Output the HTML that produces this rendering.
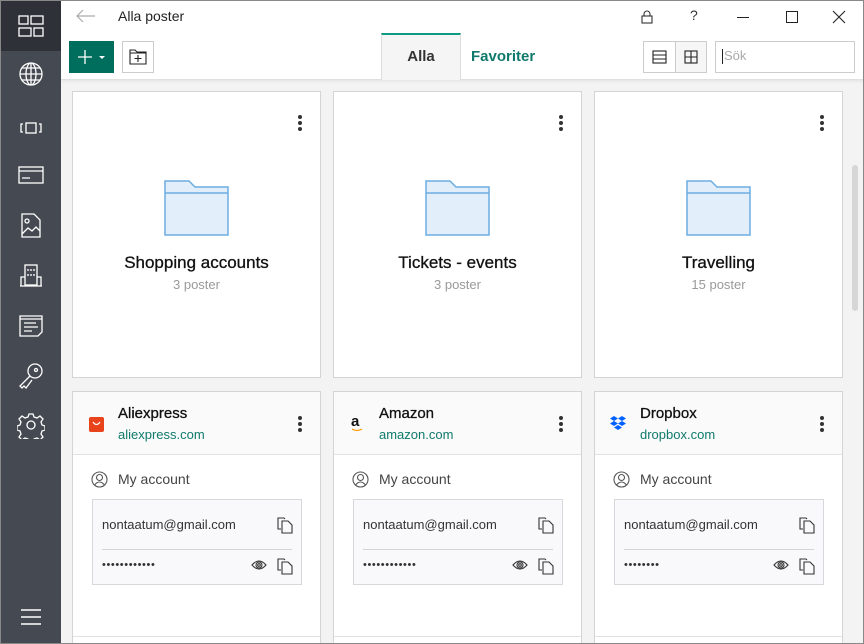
<!DOCTYPE html>
<html style="width:864px;height:644px;overflow:hidden"><head><meta charset="utf-8"><style>
*{box-sizing:border-box;margin:0;padding:0}
body{width:864px;height:644px;overflow:hidden;font-family:"Segoe UI","Liberation Sans",sans-serif;background:#f3f3f3;position:relative;color:#222}
.side{position:absolute;left:0;top:0;width:61px;height:644px;background:#454a52}
.side .top{position:absolute;left:0;top:0;width:61px;height:51px;background:#2e3238}
.ic{position:absolute;left:17px;width:28px;height:28px}
.hdr{position:absolute;left:61px;top:0;right:0;height:80px;background:#fff;border-bottom:1px solid #e0e0e0;box-shadow:0 1px 3px rgba(0,0,0,.08)}
.abs{position:absolute}
.card{position:absolute;background:#fff;border:1px solid #d4d4d4}
.dots{position:absolute;width:4px}
.dots i{display:block;width:4px;height:4px;border-radius:2px;background:#333;margin-bottom:2px}
.ftitle{position:absolute;left:0;right:0;text-align:center;font-size:17px;color:#111;-webkit-text-stroke:0.3px #111}
.fsub{position:absolute;left:0;right:0;text-align:center;font-size:13px;color:#999}
.ch{position:absolute;left:0;right:0;top:0;height:63px;background:#fafafa;border-bottom:1px solid #e2e2e2}
.nm{position:absolute;left:45px;top:13px;font-size:15px;color:#111;-webkit-text-stroke:0.3px #111}
.url{position:absolute;left:45px;top:35px;font-size:13px;color:#0f7a6b}
.acc{position:absolute;left:45px;top:79px;font-size:14px;color:#444}
.box{position:absolute;left:19px;top:107px;width:210px;height:86px;background:#f9f9fb;border:1px solid #d8d8dc}
.em{position:absolute;left:9px;top:17px;font-size:13px;color:#333}
.pw{position:absolute;left:9px;top:59px;font-size:11px;color:#333;letter-spacing:0.6px}
.sep{position:absolute;left:9px;right:9px;top:49px;border-top:1px solid #d4d4d4}
</style></head><body>
<div class="side"><div class="top"></div>
<svg class="ic" style="top:12px" viewBox="0 0 28 28" fill="none" stroke="#fff" stroke-width="1.3"><rect x="2" y="4" width="9" height="8"/><rect x="14" y="4" width="12" height="8"/><rect x="2" y="16" width="12" height="8"/><rect x="17" y="16" width="9" height="8"/></svg>
<svg class="ic" style="top:60px" viewBox="0 0 28 28" fill="none" stroke="#fff" stroke-width="1.3"><circle cx="14" cy="14" r="11"/><ellipse cx="14" cy="14" rx="5" ry="11"/><path d="M3 14h22M5 8h18M5 20h18M14 3v22"/></svg>
<svg class="ic" style="top:114px" viewBox="0 0 28 28" fill="none" stroke="#fff" stroke-width="1.3"><rect x="9" y="9" width="10" height="10"/><path d="M6 10h-2v8h2M22 10h2v8h-2"/></svg>
<svg class="ic" style="top:161px" viewBox="0 0 28 28" fill="none" stroke="#fff" stroke-width="1.3"><rect x="2" y="6" width="24" height="16"/><path d="M2 10h24M5 17h8"/></svg>
<svg class="ic" style="top:211px" viewBox="0 0 28 28" fill="none" stroke="#fff" stroke-width="1.3"><path d="M5 3h12l6 6v17H5z"/><circle cx="10" cy="10" r="2"/><path d="M5 23l6-6 4 3 4-4 4 4"/></svg>
<svg class="ic" style="top:261px" viewBox="0 0 28 28" fill="none" stroke="#fff" stroke-width="1.3"><rect x="8" y="4" width="12" height="20"/><path d="M3 25h22M4 25v-9h4M24 25v-9h-4M11 8v2M14 8v2M17 8v2M11 13v2M14 13v2M17 13v2"/></svg>
<svg class="ic" style="top:311px" viewBox="0 0 28 28" fill="none" stroke="#fff" stroke-width="1.3"><path d="M3 5h22v16l-4 4H3z M3 8h22M7 12h12M7 16h14M7 20h8"/></svg>
<svg class="ic" style="top:361px" viewBox="0 0 28 28" fill="none" stroke="#fff" stroke-width="1.3"><circle cx="18" cy="10" r="7"/><circle cx="19" cy="9" r="1.5"/><path d="M13 15L3 25l2 2 2-2 2 2 6-8"/></svg>
<svg class="ic" style="top:411px" viewBox="0 0 28 28" fill="none" stroke="#fff" stroke-width="1.3"><circle cx="14" cy="14" r="4"/><path d="M12 3h4l1 3 3 1 3-2 3 3-2 3 1 3 3 1v4l-3 1-1 3 2 3-3 3-3-2-3 1-1 3h-4l-1-3-3-1-3 2-3-3 2-3-1-3-3-1v-4l3-1 1-3-2-3 3-3 3 2 3-1z"/></svg>
<svg class="ic" style="top:603px" viewBox="0 0 28 28" stroke="#fff" stroke-width="1.5"><path d="M4 7h20M4 14h20M4 21h20"/></svg>
</div>
<div class="hdr">
<svg class="abs" style="left:15px;top:9px" width="20" height="14" viewBox="0 0 20 14" fill="none" stroke="#aaa" stroke-width="1.2"><path d="M1 7h18M7 1L1 7l6 6"/></svg>
<div class="abs" style="left:57px;top:8px;font-size:14px;color:#222">Alla poster</div>
<svg class="abs" style="left:580px;top:10px" width="12" height="14" viewBox="0 0 12 14" fill="none" stroke="#333" stroke-width="1.1"><rect x="1" y="6" width="10" height="7"/><path d="M3 6V4a3 3 0 0 1 6 0v2"/></svg>
<div class="abs" style="left:629px;top:7px;font-size:14px;color:#333">?</div>
<div class="abs" style="left:676px;top:17px;width:12px;border-top:1px solid #222"></div>
<div class="abs" style="left:725px;top:11px;width:12px;height:12px;border:1px solid #222"></div>
<svg class="abs" style="left:771px;top:10px" width="14" height="14" stroke="#222" stroke-width="1.1"><path d="M1 1l12 12M13 1L1 13"/></svg>
<div class="abs" style="left:8px;top:41px;width:45px;height:32px;background:#006e5c"></div>
<svg class="abs" style="left:15px;top:48px" width="34" height="18" stroke="#fff" stroke-width="1.3"><path d="M2 9h14M9 2v14"/><path d="M23 8h6l-3 3z" fill="#fff" stroke="none"/></svg>
<div class="abs" style="left:61px;top:41px;width:32px;height:32px;border:1px solid #ccc"></div>
<svg class="abs" style="left:67px;top:47px" width="20" height="20" fill="none" stroke="#222" stroke-width="1.1"><path d="M2 3h5l2 2h9v12H2z M2 6h16M10 8v7M6.5 11.5h7"/></svg>
<div class="abs" style="left:320px;top:33px;width:80px;height:47px;background:#f5f5f5;border:1px solid #ddd;border-bottom:none;border-top:2px solid #0f9a82"></div>
<div class="abs" style="left:320px;top:48px;width:80px;text-align:center;font-size:15px;font-weight:bold;color:#333">Alla</div>
<div class="abs" style="left:410px;top:48px;font-size:15px;font-weight:bold;color:#0f7a6b">Favoriter</div>
<div class="abs" style="left:582px;top:41px;width:64px;height:32px;border:1px solid #ccc;background:#fff"></div>
<div class="abs" style="left:614px;top:41px;width:32px;height:32px;border:1px solid #ccc;background:#f6f6f6"></div>
<svg class="abs" style="left:590px;top:49px" width="50" height="16" fill="none" stroke="#222" stroke-width="1.1"><rect x="2" y="2" width="13" height="12"/><path d="M2 6h13M2 10h13"/><rect x="34" y="2" width="12" height="12"/><path d="M40 2v12M34 8h12"/></svg>
<div class="abs" style="left:654px;top:41px;width:140px;height:32px;border:1px solid #ccc;background:#fff"></div>
<div class="abs" style="left:661px;top:49px;height:15px;border-left:1px solid #222"></div>
<div class="abs" style="left:663px;top:48px;font-size:13px;color:#aaa">Sök</div>
</div>
<div class="abs" style="left:852px;top:165px;width:6px;height:146px;border-radius:3px;background:#d6d6d6"></div>

<div class="card" style="left:72px;top:91px;width:249px;height:287px">
<div class="dots" style="left:225px;top:23px"><i></i><i></i><i></i></div>
<svg class="abs" style="left:91px;top:88px" width="66" height="58" fill="#e2eef9" stroke="#6caee2" stroke-width="1.5"><path d="M1 1h24l6 6h33v48H1z"/><path d="M1 13h63" fill="none"/></svg>
<div class="ftitle" style="top:161px">Shopping accounts</div><div class="fsub" style="top:185px">3 poster</div></div>
<div class="card" style="left:333px;top:91px;width:249px;height:287px">
<div class="dots" style="left:225px;top:23px"><i></i><i></i><i></i></div>
<svg class="abs" style="left:91px;top:88px" width="66" height="58" fill="#e2eef9" stroke="#6caee2" stroke-width="1.5"><path d="M1 1h24l6 6h33v48H1z"/><path d="M1 13h63" fill="none"/></svg>
<div class="ftitle" style="top:161px">Tickets - events</div><div class="fsub" style="top:185px">3 poster</div></div>
<div class="card" style="left:594px;top:91px;width:249px;height:287px">
<div class="dots" style="left:225px;top:23px"><i></i><i></i><i></i></div>
<svg class="abs" style="left:91px;top:88px" width="66" height="58" fill="#e2eef9" stroke="#6caee2" stroke-width="1.5"><path d="M1 1h24l6 6h33v48H1z"/><path d="M1 13h63" fill="none"/></svg>
<div class="ftitle" style="top:161px">Travelling</div><div class="fsub" style="top:185px">15 poster</div></div>

<div class="card" style="left:72px;top:391px;width:249px;height:253px;border-bottom:none">
<div class="ch"><div class="abs" style="left:16px;top:25px;width:15px;height:15px;background:#e8431a;border-radius:2px"></div><svg class="abs" style="left:18px;top:28px" width="11" height="8" fill="none" stroke="#fff" stroke-width="1.2"><path d="M2 2q3.5 5 7 0"/></svg>
<div class="nm">Aliexpress</div><div class="url">aliexpress.com</div><div class="dots" style="left:225px;top:24px"><i></i><i></i><i></i></div></div>
<svg class="abs" style="left:18px;top:79px" width="17" height="17" fill="none" stroke="#555" stroke-width="1.1"><circle cx="8.5" cy="8.5" r="7.5"/><circle cx="8.5" cy="6.5" r="3"/><path d="M3.5 14q5-6 10 0"/></svg>
<div class="acc">My account</div>
<div class="box"><div class="em">nontaatum@gmail.com</div><div class="sep"></div><div class="pw">••••••••••••</div>
<svg class="abs" style="left:183px;top:16px" width="18" height="18" fill="none" stroke="#333" stroke-width="1.1"><path d="M5 13H2V2h6l1 1M6 5h6l4 4v8H6z"/></svg>
<svg class="abs" style="left:158px;top:57px" width="44" height="18" fill="none" stroke="#333" stroke-width="1.1"><path d="M1 8q7-8 14 0q-7 8-14 0z"/><circle cx="8" cy="8" r="3"/><circle cx="8" cy="8" r="1.3"/><path d="M30 13h-3V2h6l1 1M31 5h6l4 4v8H31z"/></svg></div>
<div class="abs" style="left:0;right:0;top:244px;border-top:1px solid #e2e2e2"></div>
</div>
<div class="card" style="left:333px;top:391px;width:249px;height:253px;border-bottom:none">
<div class="ch"><div class="abs" style="left:17px;top:21px;font-size:15px;font-weight:bold;color:#111;font-family:'Liberation Sans',sans-serif">a</div><svg class="abs" style="left:17px;top:36px" width="12" height="5" fill="none" stroke="#f90" stroke-width="1.3"><path d="M1 1q5 3 10 0"/></svg>
<div class="nm">Amazon</div><div class="url">amazon.com</div><div class="dots" style="left:225px;top:24px"><i></i><i></i><i></i></div></div>
<svg class="abs" style="left:18px;top:79px" width="17" height="17" fill="none" stroke="#555" stroke-width="1.1"><circle cx="8.5" cy="8.5" r="7.5"/><circle cx="8.5" cy="6.5" r="3"/><path d="M3.5 14q5-6 10 0"/></svg>
<div class="acc">My account</div>
<div class="box"><div class="em">nontaatum@gmail.com</div><div class="sep"></div><div class="pw">••••••••••••</div>
<svg class="abs" style="left:183px;top:16px" width="18" height="18" fill="none" stroke="#333" stroke-width="1.1"><path d="M5 13H2V2h6l1 1M6 5h6l4 4v8H6z"/></svg>
<svg class="abs" style="left:158px;top:57px" width="44" height="18" fill="none" stroke="#333" stroke-width="1.1"><path d="M1 8q7-8 14 0q-7 8-14 0z"/><circle cx="8" cy="8" r="3"/><circle cx="8" cy="8" r="1.3"/><path d="M30 13h-3V2h6l1 1M31 5h6l4 4v8H31z"/></svg></div>
<div class="abs" style="left:0;right:0;top:244px;border-top:1px solid #e2e2e2"></div>
</div>
<div class="card" style="left:594px;top:391px;width:249px;height:253px;border-bottom:none">
<div class="ch"><svg class="abs" style="left:15px;top:24px" width="16" height="15" fill="#0061fe"><path d="M4 0l4 2.5-4 2.5-4-2.5zM12 0l4 2.5-4 2.5-4-2.5zM4 5l4 2.5-4 2.5-4-2.5zM12 5l4 2.5-4 2.5-4-2.5zM8 9l4 2.5-4 2.5-4-2.5z"/></svg>
<div class="nm">Dropbox</div><div class="url">dropbox.com</div><div class="dots" style="left:225px;top:24px"><i></i><i></i><i></i></div></div>
<svg class="abs" style="left:18px;top:79px" width="17" height="17" fill="none" stroke="#555" stroke-width="1.1"><circle cx="8.5" cy="8.5" r="7.5"/><circle cx="8.5" cy="6.5" r="3"/><path d="M3.5 14q5-6 10 0"/></svg>
<div class="acc">My account</div>
<div class="box"><div class="em">nontaatum@gmail.com</div><div class="sep"></div><div class="pw">••••••••</div>
<svg class="abs" style="left:183px;top:16px" width="18" height="18" fill="none" stroke="#333" stroke-width="1.1"><path d="M5 13H2V2h6l1 1M6 5h6l4 4v8H6z"/></svg>
<svg class="abs" style="left:158px;top:57px" width="44" height="18" fill="none" stroke="#333" stroke-width="1.1"><path d="M1 8q7-8 14 0q-7 8-14 0z"/><circle cx="8" cy="8" r="3"/><circle cx="8" cy="8" r="1.3"/><path d="M30 13h-3V2h6l1 1M31 5h6l4 4v8H31z"/></svg></div>
<div class="abs" style="left:0;right:0;top:244px;border-top:1px solid #e2e2e2"></div>
</div>
<div class="abs" style="left:0;top:0;width:864px;height:644px;border:1px solid #888;pointer-events:none"></div>
</body></html>
